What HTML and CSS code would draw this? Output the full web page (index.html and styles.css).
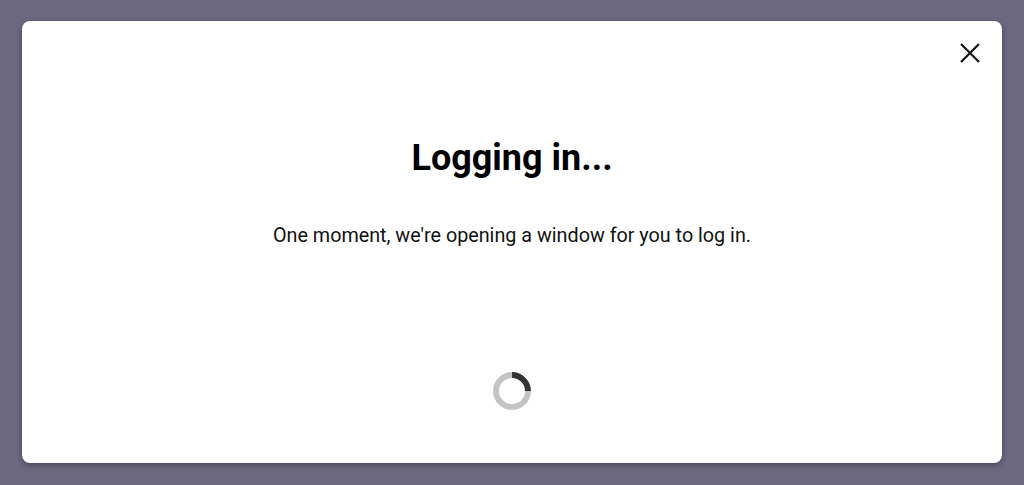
FILE: index.html
```html
<!DOCTYPE html>
<html lang="en">
<head>
  <meta charset="UTF-8">
  <meta name="viewport" content="width=device-width, initial-scale=1.0">
  <title>Logging in</title>
  <link rel="stylesheet" href="styles.css">
</head>
<body>
  <div class="overlay">
    <div class="dialog">
      <button class="close" aria-label="Close">
        <svg width="24" height="24" viewBox="0 0 24 24"><path d="M3 3 L21 21 M21 3 L3 21" stroke="#111" stroke-width="2.2" fill="none"/></svg>
      </button>
      <h2 class="title">Logging in...</h2>
      <p class="message">One moment, we're opening a window for you to log in.</p>
      <div class="spinner-wrap">
        <div class="spinner"></div>
      </div>
    </div>
  </div>
</body>
</html>
```

FILE: styles.css
```css
html, body {
  margin: 0;
  height: 100%;
}
body {
  font-family: Roboto, "Liberation Sans", sans-serif;
  background: #6c6880;
}
.overlay {
  box-sizing: border-box;
  height: 100%;
  padding: 21px 22px 22px 22px;
}
.dialog {
  position: relative;
  box-sizing: border-box;
  height: 442px;
  background: #fff;
  border-radius: 8px;
  box-shadow: 0 2px 6px rgba(0, 0, 0, 0.35);
  display: flex;
  flex-direction: column;
  align-items: center;
  padding-top: 116px;
}
.close {
  position: absolute;
  top: 20px;
  right: 20px;
  width: 24px;
  height: 24px;
  padding: 0;
  border: 0;
  background: none;
}
.title {
  margin: 0;
  font-size: 36px;
  font-weight: 700;
  line-height: 42px;
  color: #000;
}
.message {
  margin: 44px 0 0;
  font-size: 19.75px;
  line-height: 26px;
  color: #111;
}
.spinner-wrap {
  margin-top: 123px;
}
.spinner {
  width: 26px;
  height: 26px;
  border: 6px solid #c4c4c4;
  border-top-color: #333;
  border-radius: 50%;
  transform: rotate(45deg);
}
```
